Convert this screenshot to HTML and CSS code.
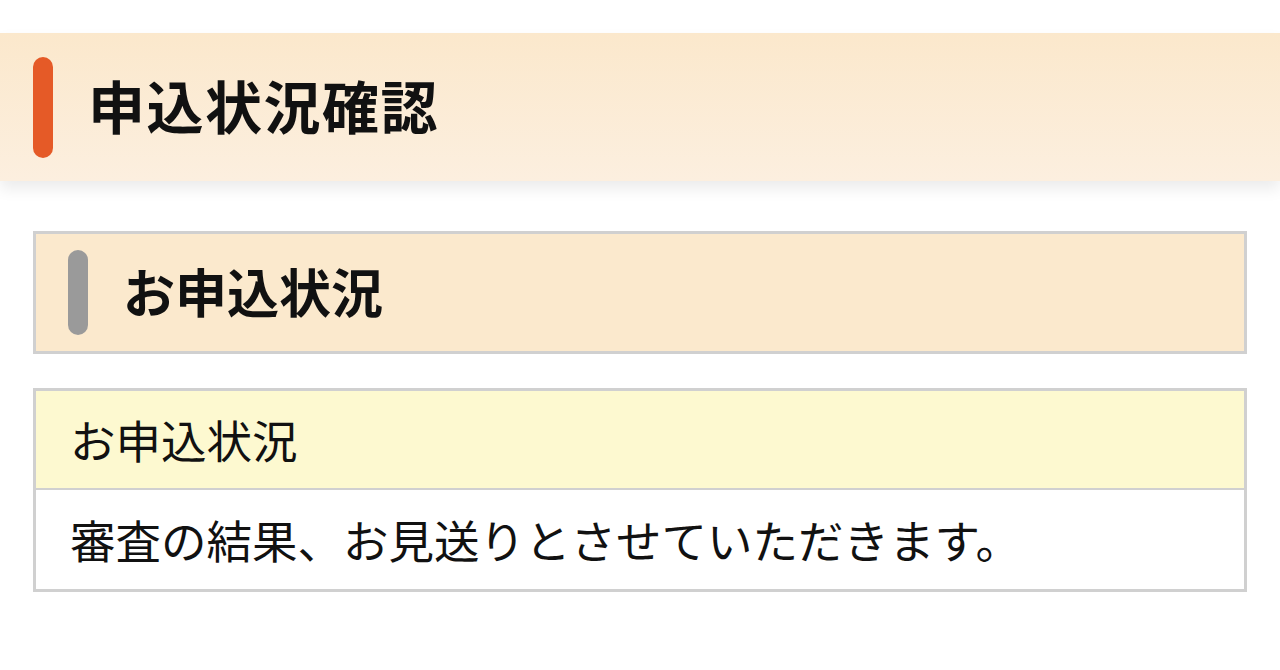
FILE: index.html
```html
<!DOCTYPE html>
<html lang="ja">
<head>
<meta charset="utf-8">
<link rel="stylesheet" href="styles.css">
</head>
<body>
<header class="page-head">
  <span class="bar bar-orange"></span>
  <h1 class="page-title">申込状況確認</h1>
</header>
<section class="sec-head">
  <span class="bar bar-gray"></span>
  <h2 class="sec-title">お申込状況</h2>
</section>
<table class="status">
  <tr><th>お申込状況</th></tr>
  <tr><td>審査の結果、お見送りとさせていただきます。</td></tr>
</table>
</body>
</html>
```
FILE: styles.css
```css
html, body {
  margin: 0;
  padding: 0;
  background: #ffffff;
  font-family: "Noto Sans CJK JP", "Noto Sans", sans-serif;
  color: #111;
}
.page-head {
  margin-top: 33px;
  height: 148px;
  display: flex;
  align-items: center;
  padding-left: 33px;
  background: linear-gradient(to bottom, #fbe8cc, #fcefdf);
  box-shadow: 0 8px 14px rgba(0, 0, 0, 0.08);
  box-sizing: border-box;
}
.bar {
  display: block;
  width: 20px;
  border-radius: 10px;
  flex: none;
}
.bar-orange {
  height: 101px;
  background: #e55a27;
}
.page-title {
  margin: 0 0 0 35px;
  font-size: 57px;
  font-weight: 700;
  line-height: 1;
  letter-spacing: 1.5px;
  position: relative;
  top: -3px;
}
.sec-head {
  margin: 50px 33px 0;
  height: 123px;
  box-sizing: border-box;
  border: 3px solid #d0d0d0;
  background: #fbe9cd;
  display: flex;
  align-items: center;
  padding-left: 32px;
}
.bar-gray {
  height: 85px;
  background: #9a9a9a;
}
.sec-title {
  margin: 0 0 0 35px;
  font-size: 52px;
  font-weight: 700;
  line-height: 1;
  position: relative;
  top: -2px;
}
.status {
  margin: 34px 33px 0;
  width: calc(100% - 66px);
  border-collapse: collapse;
  border: 3px solid #d0d0d0;
}
.status th,
.status td {
  text-align: left;
  font-weight: 400;
  font-size: 45.5px;
  line-height: 1;
  padding: 0 0 0 34px;
}
.status th {
  height: 97px;
  background: #fdf9d0;
  border-bottom: 2px solid #d0d0d0;
}
.status td {
  height: 99px;
  background: #ffffff;
}
```
